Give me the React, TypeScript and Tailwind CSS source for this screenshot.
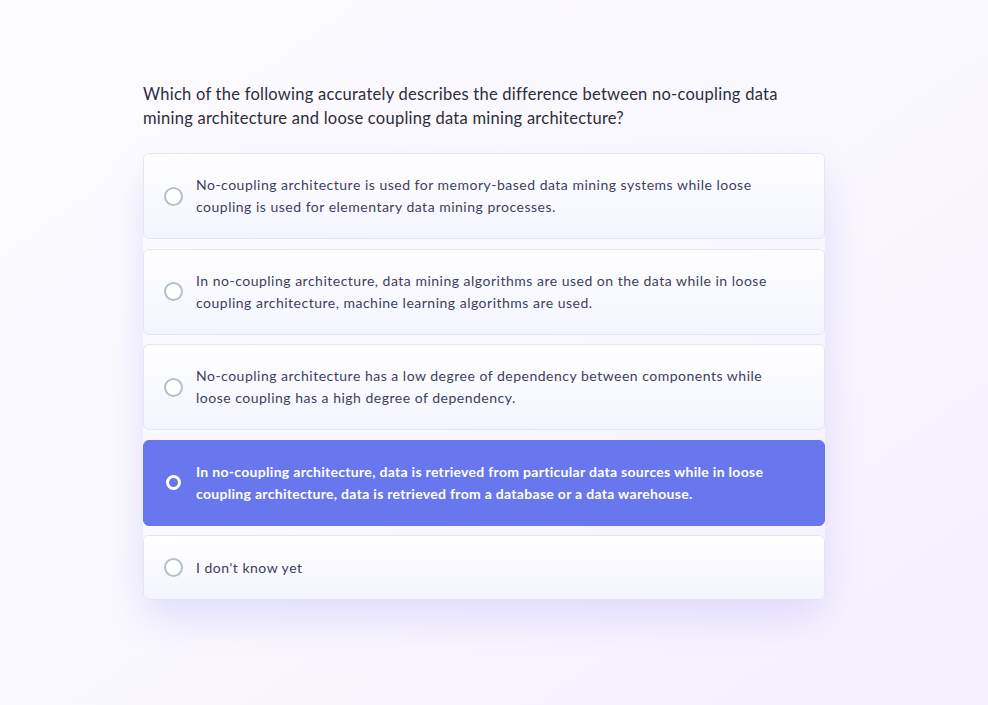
import React from 'react';

const options = [
  'No-coupling architecture is used for memory-based data mining systems while loose coupling is used for elementary data mining processes.',
  'In no-coupling architecture, data mining algorithms are used on the data while in loose coupling architecture, machine learning algorithms are used.',
  'No-coupling architecture has a low degree of dependency between components while loose coupling has a high degree of dependency.',
  'In no-coupling architecture, data is retrieved from particular data sources while in loose coupling architecture, data is retrieved from a database or a data warehouse.',
  "I don't know yet",
];

const Radio: React.FC<{ checked: boolean }> = ({ checked }) =>
  checked ? (
    <div className="w-[19px] h-[19px] shrink-0 flex items-center justify-center">
      <div className="w-[15px] h-[15px] rounded-full border-[3px] border-white" />
    </div>
  ) : (
    <div className="w-[19px] h-[19px] shrink-0 rounded-full border-2 border-[#b4c2c8] bg-white" />
  );

export default function App() {
  const selected = 3;
  return (
    <div
      className="min-h-screen w-full bg-gradient-to-br from-[#fdfcff] via-[#f9f7ff] to-[#f6efff] pt-[82px]"
      style={{ fontFamily: 'Lato, "Noto Sans", sans-serif' }}
    >
      <div className="w-[682px] ml-[143px]">
        <h2 className="text-[16.5px] leading-[24px] tracking-[0.25px] text-[#2d2d3a] pr-[40px]">
          Which of the following accurately describes the difference between no-coupling data mining architecture and loose coupling data mining architecture?
        </h2>
        <div className="mt-[23px] flex flex-col gap-[9.5px] shadow-[0_18px_40px_-6px_rgba(120,110,240,0.22)] rounded-md">
          {options.map((text, i) => {
            const isSel = i === selected;
            return (
              <button
                key={i}
                className={
                  'flex items-center gap-[13px] pl-[20px] pr-[21px] py-[20px] min-h-[65px] rounded-md text-left border ' +
                  (isSel
                    ? 'bg-[#6877ee] border-[#6877ee] text-white font-bold tracking-[0.3px]'
                    : 'bg-gradient-to-b from-white to-[#f3f4ff] border-[#e6e6f0] text-[#3d3f5c] tracking-[0.5px]')
                }
              >
                <Radio checked={isSel} />
                <span className="text-[14px] leading-[22px] pr-[10px]">{text}</span>
              </button>
            );
          })}
        </div>
      </div>
    </div>
  );
}
